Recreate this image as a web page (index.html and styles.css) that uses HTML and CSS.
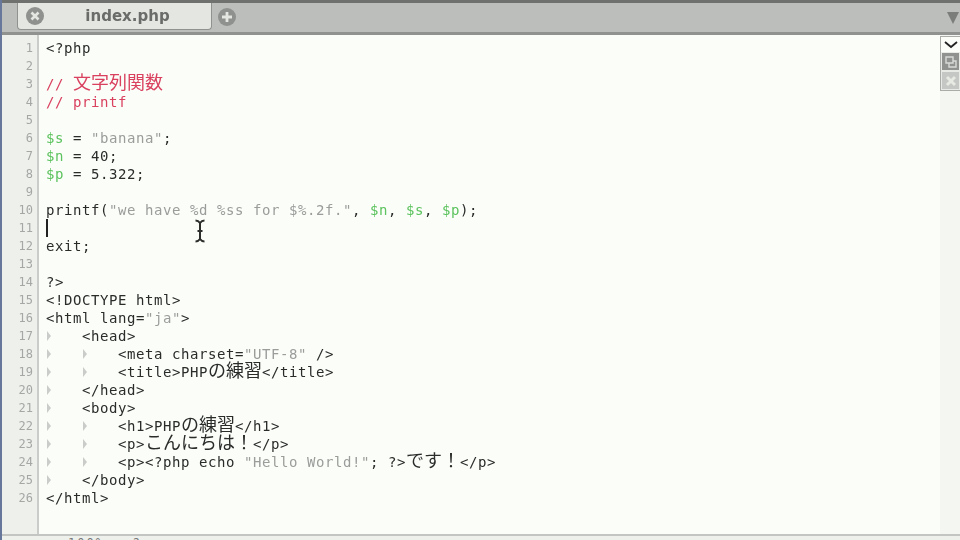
FILE: index.html
```html
<!DOCTYPE html>
<html lang="ja">
<head>
<meta charset="utf-8">
<title>index.php</title>
<link rel="stylesheet" href="styles.css">
</head>
<body>
<div class="app">
  <header class="tabbar">
    <div class="tab">
      <span class="btn close"><svg viewBox="0 0 18 18" width="18" height="18"><path d="M5.5 5.5l7 7M12.5 5.5l-7 7" stroke="#e4e6e2" stroke-width="2.6" fill="none"/></svg></span>
      <span class="tabname">index.php</span>
    </div>
    <span class="btn plus"><svg viewBox="0 0 18 18" width="18" height="18"><path d="M9 4v10M4 9h10" stroke="#e4e6e2" stroke-width="2.8" fill="none"/></svg></span>
    <span class="menu"></span>
  </header>
  <main class="main">
    <div class="gutter">
      <div>1</div><div>2</div><div>3</div><div>4</div><div>5</div><div>6</div><div>7</div><div>8</div><div>9</div><div>10</div><div>11</div><div>12</div><div>13</div><div>14</div><div>15</div><div>16</div><div>17</div><div>18</div><div>19</div><div>20</div><div>21</div><div>22</div><div>23</div><div>24</div><div>25</div><div>26</div>
    </div>
    <div class="code">
      <div class="ln">&lt;?php</div>
      <div class="ln"></div>
      <div class="ln red">// <span class="cjk">文字列関数</span></div>
      <div class="ln red">// printf</div>
      <div class="ln"></div>
      <div class="ln"><span class="var">$s</span> = <span class="str">"banana"</span>;</div>
      <div class="ln"><span class="var">$n</span> = 40;</div>
      <div class="ln"><span class="var">$p</span> = 5.322;</div>
      <div class="ln"></div>
      <div class="ln">printf(<span class="str">"we have %d %ss for $%.2f."</span>, <span class="var">$n</span>, <span class="var">$s</span>, <span class="var">$p</span>);</div>
      <div class="ln"><span class="caret"></span></div>
      <div class="ln">exit;</div>
      <div class="ln"></div>
      <div class="ln">?&gt;</div>
      <div class="ln">&lt;!DOCTYPE html&gt;</div>
      <div class="ln">&lt;html lang=<span class="str">"ja"</span>&gt;</div>
      <div class="ln"><span class="t"></span>&lt;head&gt;</div>
      <div class="ln"><span class="t"></span><span class="t"></span>&lt;meta charset=<span class="str">"UTF-8"</span> /&gt;</div>
      <div class="ln"><span class="t"></span><span class="t"></span>&lt;title&gt;PHP<span class="cjk">の練習</span>&lt;/title&gt;</div>
      <div class="ln"><span class="t"></span>&lt;/head&gt;</div>
      <div class="ln"><span class="t"></span>&lt;body&gt;</div>
      <div class="ln"><span class="t"></span><span class="t"></span>&lt;h1&gt;PHP<span class="cjk">の練習</span>&lt;/h1&gt;</div>
      <div class="ln"><span class="t"></span><span class="t"></span>&lt;p&gt;<span class="cjk">こんにちは！</span>&lt;/p&gt;</div>
      <div class="ln"><span class="t"></span><span class="t"></span>&lt;p&gt;&lt;?php echo <span class="str">"Hello World!"</span>; ?&gt;<span class="cjk">です！</span>&lt;/p&gt;</div>
      <div class="ln"><span class="t"></span>&lt;/body&gt;</div>
      <div class="ln">&lt;/html&gt;</div>
      <svg class="ibeam" viewBox="0 0 12 24" width="12" height="24"><path d="M1.5 1.5C4 1.5 5 2.5 6 4 7 2.5 8 1.5 10.5 1.5M6 4v16M1.5 22.5C4 22.5 5 21.5 6 20 7 21.5 8 22.5 10.5 22.5M3.5 12h5" stroke="#2c2e2c" stroke-width="2" fill="none"/></svg>
    </div>
    <aside class="side">
      <div class="sidebox">
        <span class="sb chev"><svg viewBox="0 0 16 8" width="16" height="8"><path d="M2 1l6 5 6-5" stroke="#222" stroke-width="1.8" fill="none"/></svg></span>
        <span class="sb dark"><svg viewBox="0 0 14 14" width="14" height="14"><path d="M2 2h7v6H2zM5 8v4h7V6H9" stroke="#d8dad6" stroke-width="1.4" fill="none"/></svg></span>
        <span class="sb lite"><svg viewBox="0 0 14 14" width="14" height="14"><path d="M3 3l8 8M11 3l-8 8" stroke="#e6eae2" stroke-width="3" fill="none"/></svg></span>
      </div>
    </aside>
  </main>
  <footer class="status"><span class="statustext">100% ▸ ?</span></footer>
</div>
</body>
</html>
```
FILE: styles.css
```css
* { box-sizing: border-box; }
html, body { margin: 0; height: 100%; }
body { background: #fbfdf9; overflow: hidden; }
.app {
  width: 960px; height: 540px; display: flex; flex-direction: column;
  border-left: 2px solid #66779b; overflow: hidden;
  font-family: "DejaVu Sans Mono", monospace;
}
.tabbar {
  height: 35px; flex: none; display: flex; align-items: flex-start; gap: 6px;
  background: #bbbebb; border-top: 3px solid #6f716f; border-bottom: 3px solid #8f928f;
  padding-left: 15px; position: relative;
}
.tab {
  width: 195px; height: 27px; background: #e4e6e1; border: 1px solid #8f928e; border-top: 0;
  border-radius: 0 0 4px 4px; display: flex; align-items: center; padding-left: 8px;
  position: relative;
}
.btn {
  width: 18px; height: 18px; border-radius: 50%; background: #8e918d; display: block; flex: none;
}
.btn svg { display: block; }
.plus { margin-top: 5px; }
.tabname {
  flex: 1; text-align: center; font: bold 15px "DejaVu Sans", sans-serif; color: #6a6c6a;
  filter: blur(.4px);
}
.menu {
  position: absolute; right: 1px; top: 9px; width: 0; height: 0;
  border-left: 6px solid transparent; border-right: 6px solid transparent; border-top: 12px solid #7b7d7b;
}
.main { flex: 1; min-height: 0; display: flex; }
.gutter {
  width: 37px; flex: none; background: #eef0ec; border-right: 2px solid #c9ccc8;
  padding: 4px 4px 0 0; text-align: right; color: #a4a7a4;
  font-size: 12px; line-height: 18px; filter: blur(.3px);
}
.code {
  flex: 1; padding: 4px 0 0 7px; position: relative; color: #2a2c2a;
  font-size: 14px; line-height: 18px; letter-spacing: .57px;
}
.ln { height: 18px; white-space: pre; filter: blur(.35px); }
.red { color: #d9415f; }
.var { color: #5cc35e; }
.str { color: #9a9d9a; }
.cjk { font-family: "Noto Sans CJK JP", sans-serif; font-size: 18px; letter-spacing: 0; line-height: 0; }
.t {
  display: inline-block; width: 36px; height: 10px; position: relative;
}
.t::before {
  content: ""; position: absolute; left: 1px; top: 0; width: 0; height: 0;
  border-left: 4px solid #c9ccc8; border-top: 5px solid transparent; border-bottom: 5px solid transparent;
}
.caret { display: inline-block; width: 1.5px; height: 18px; background: #222; vertical-align: top; }
.ibeam { position: absolute; left: 155px; top: 184px; }
.side { width: 20px; flex: none; background: #f4f6f2; }
.sidebox {
  height: 55px; margin-top: 1px; border: 1px solid #a9aca8; border-right: 0; display: flex; flex-direction: column; background: #e8eae6;
}
.sb { height: 18px; display: flex; align-items: center; justify-content: center; }
.chev { background: #fbfdf9; height: 16px; }
.dark { background: #8f928e; margin: 1px; }
.lite { background: #c4c7c3; margin: 1px; }
.status { height: 6px; flex: none; border-top: 2px solid #c2c5c1; background: #eef0ec; overflow: hidden; padding-left: 66px; }
.statustext { display: block; font-size: 12px; line-height: 14px; color: #777; letter-spacing: 2px; }
```
